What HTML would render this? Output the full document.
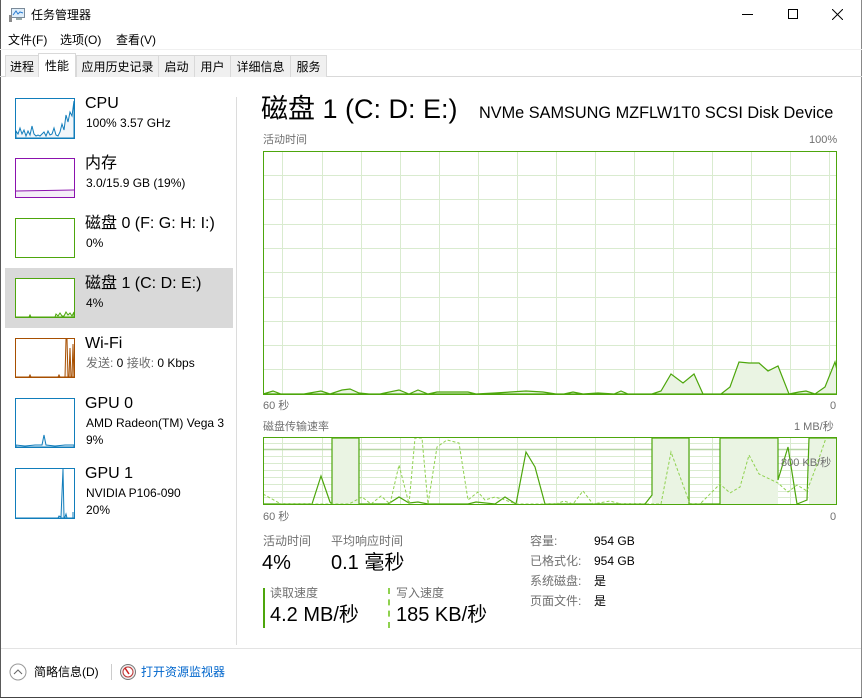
<!DOCTYPE html>
<html><head><meta charset="utf-8"><style>
*{margin:0;padding:0;box-sizing:border-box}
body{width:862px;height:698px;overflow:hidden;background:#fff;font-family:"Liberation Sans","Noto Sans CJK SC",sans-serif;color:#000;position:relative;line-height:1.2}
.a{position:absolute;white-space:nowrap}
.menu{font-size:12px;top:33px}
.tab{position:absolute;top:55px;height:22px;font-size:12px;border:1px solid #d9d9d9;border-bottom:none;background:#f0f0f0;padding:3px 0 0 0;text-align:center;white-space:nowrap;line-height:16px}
.nm{font-size:16px;left:85px;line-height:18px}
.sb{font-size:12px;left:86px;line-height:14px}
.g{color:#6d6d6d}
.lbl{font-size:11px;color:#707070;line-height:13px}
</style></head><body>
<div class="a" style="left:0;top:0;width:1px;height:698px;background:#5a5a5a"></div>
<div class="a" style="right:0;top:0;width:1px;height:698px;background:#888"></div>
<div class="a" style="left:0;top:697px;width:862px;height:1px;background:#444"></div>
<svg class="a" style="left:8px;top:7px" width="18" height="16"><rect x="3.5" y="1.5" width="13" height="9" fill="#dfeefa" stroke="#7a8a99"/><polyline points="5,8 8,4 10,7 12,5 15,6" fill="none" stroke="#2a7bd0"/><rect x="1" y="8" width="3" height="7" fill="#8a8a8a"/><rect x="8" y="11" width="6" height="2" fill="#9aa"/></svg>
<div class="a" style="left:31px;top:8px;font-size:12px;line-height:14px">任务管理器</div>
<div class="a" style="left:742px;top:14px;width:11px;height:1px;background:#000"></div>
<div class="a" style="left:788px;top:9px;width:10px;height:10px;border:1px solid #000"></div>
<svg class="a" style="left:832px;top:9px" width="11" height="11"><path d="M0,0L11,11M11,0L0,11" stroke="#000" stroke-width="1"/></svg>
<div class="a menu" style="left:8px;line-height:14px">文件(F)</div>
<div class="a menu" style="left:60px;line-height:14px">选项(O)</div>
<div class="a menu" style="left:116px;line-height:14px">查看(V)</div>
<div class="a" style="left:0;top:49px;width:862px;height:1px;background:#f0f0f0"></div>
<div class="a" style="left:0;top:76px;width:862px;height:1px;background:#d9d9d9"></div>
<div class="tab" style="left:5px;width:34px">进程</div>
<div class="tab" style="left:38px;top:53px;height:24px;width:38px;background:#fff;padding-top:4px">性能</div>
<div class="tab" style="left:76px;width:83px">应用历史记录</div>
<div class="tab" style="left:158px;width:37px">启动</div>
<div class="tab" style="left:194px;width:37px">用户</div>
<div class="tab" style="left:230px;width:61px">详细信息</div>
<div class="tab" style="left:290px;width:37px">服务</div>
<div class="a" style="left:5px;top:268px;width:228px;height:60px;background:#d9d9d9"></div>
<div class="a" style="left:236px;top:97px;width:1px;height:548px;background:#dcdcdc"></div>
<svg class="a" style="left:15px;top:98px" width="60" height="41"><rect x="0.5" y="0.5" width="59" height="40" fill="#fff" stroke="#117dbb"/><path d="M1,40 L1,33 3,36 5,30 7,36 9,32 11,38 13,33 15,37 17,28 19,36 21,38 23,37 25,38 27,36 29,34 31,38 33,33 35,37 37,36 39,30 41,37 43,38 45,34 47,26 49,32 51,17 53,24 55,14 57,18 59,3 L59,40Z" fill="#f1f6fa" stroke="#117dbb" stroke-width="1"/></svg>
<div class="a nm" style="top:95px">CPU</div><div class="a sb" style="top:116px">100% 3.57 GHz</div>
<svg class="a" style="left:15px;top:158px" width="60" height="40"><rect x="0.5" y="0.5" width="59" height="39" fill="#fff" stroke="#8b12ae"/><rect x="1" y="33" width="58" height="6" fill="#f4eef7"/><line x1="1" y1="33" x2="59" y2="32" stroke="#8b12ae"/></svg>
<div class="a nm" style="top:155px">内存</div><div class="a sb" style="top:176px">3.0/15.9 GB (19%)</div>
<svg class="a" style="left:15px;top:218px" width="60" height="40"><rect x="0.5" y="0.5" width="59" height="39" fill="#fff" stroke="#4da60c"/></svg>
<div class="a nm" style="top:215px">磁盘 0 (F: G: H: I:)</div><div class="a sb" style="top:236px">0%</div>
<svg class="a" style="left:15px;top:278px" width="60" height="40"><rect x="0.5" y="0.5" width="59" height="39" fill="#fff" stroke="#4da60c"/><path d="M1,39 L14,39 15,37 16,39 40,39 41,36 43,38 45,35 47,38 49,38 51,34 53,37 55,35 57,38 59,34 L59,39Z" fill="#eaf4e3" stroke="#4da60c"/></svg>
<div class="a nm" style="top:275px">磁盘 1 (C: D: E:)</div><div class="a sb" style="top:296px">4%</div>
<svg class="a" style="left:15px;top:338px" width="60" height="40"><rect x="0.5" y="0.5" width="59" height="39" fill="#fff" stroke="#a74f01"/><path d="M1,39 L14,39 15,37 16,39 43,39 44,37 45,39 50,39 51,1 52,1 53,39 54,39 55,10 56,39 57,39 58,6 59,39Z" fill="#f6ede4" stroke="#a74f01"/></svg>
<div class="a nm" style="top:335px">Wi-Fi</div><div class="a sb" style="top:356px"><span class="g">发送:</span> 0 <span class="g">接收:</span> 0 Kbps</div>
<svg class="a" style="left:15px;top:398px" width="60" height="50"><rect x="0.5" y="0.5" width="59" height="49" fill="#fff" stroke="#117dbb"/><path d="M1,49 L1,47 10,48 20,47 27,47 29,37 31,47 40,48 50,47 59,47 L59,49Z" fill="#eef5fa" stroke="#117dbb"/></svg>
<div class="a nm" style="top:395px">GPU 0</div><div class="a sb" style="top:416px">AMD Radeon(TM) Vega 3</div><div class="a sb" style="top:433px">9%</div>
<svg class="a" style="left:15px;top:468px" width="60" height="51"><rect x="0.5" y="0.5" width="59" height="50" fill="#fff" stroke="#117dbb"/><path d="M1,50 L43,50 44,48 46,49 48,1 49,49 50,49 51,46 52,50 59,50Z" fill="#eef5fa" stroke="#117dbb"/><line x1="58" y1="44" x2="58" y2="50" stroke="#117dbb"/></svg>
<div class="a nm" style="top:465px">GPU 1</div><div class="a sb" style="top:486px">NVIDIA P106-090</div><div class="a sb" style="top:503px">20%</div>
<div class="a" style="left:261px;top:93px;font-size:27px;line-height:32px">磁盘 1 (C: D: E:)</div>
<div class="a" style="left:479px;top:104px;font-size:16.3px;line-height:19px">NVMe SAMSUNG MZFLW1T0 SCSI Disk Device</div>
<div class="a lbl" style="left:263px;top:134px">活动时间</div>
<div class="a lbl" style="left:809px;top:134px">100%</div>
<svg class="a" style="left:263px;top:151px" width="574" height="244">
<rect width="574" height="244" fill="#fff"/>
<g stroke="#d9ebcf" stroke-width="1">
<path d="M19.5,0V244M59.5,0V244M98.5,0V244M137.5,0V244M176.5,0V244M215.5,0V244M254.5,0V244M293.5,0V244M332.5,0V244M371.5,0V244M410.5,0V244M449.5,0V244M488.5,0V244M527.5,0V244M566.5,0V244"/>
<path d="M0,24.5H574M0,48.5H574M0,73.5H574M0,97.5H574M0,121.5H574M0,146.5H574M0,170.5H574M0,194.5H574M0,218.5H574"/>
</g>
<path d="M0,243 L10,240 18,243 41,243 58,240 67,243 79,239 87,238 96,242 106,243 117,243 136,239 146,243 155,239 165,243 174,241 205,241 213,243 232,242 263,240 280,241 293,243 301,243 310,241 320,243 335,242 351,243 358,240 365,243 389,243 398,240 408,223 420,232 431,223 440,243 458,243 467,236 476,211 486,212 496,212 505,220 515,215 526,243 536,241 543,240 552,243 562,236 572,211 574,219 L574,243Z" fill="#eaf4e3" stroke="#4da60c" stroke-width="1.2"/>
<rect x="0.5" y="0.5" width="573" height="243" fill="none" stroke="#4da60c"/>
</svg>
<div class="a lbl" style="left:263px;top:400px">60 秒</div>
<div class="a lbl" style="left:830px;top:400px">0</div>
<div class="a lbl" style="left:263px;top:421px">磁盘传输速率</div>
<div class="a lbl" style="left:794px;top:421px">1 MB/秒</div>
<svg class="a" style="left:263px;top:437px" width="574" height="68">
<rect width="574" height="68" fill="#fff"/>
<g stroke="#d9ebcf">
<path d="M19.5,0V68M59.5,0V68M98.5,0V68M137.5,0V68M176.5,0V68M215.5,0V68M254.5,0V68M293.5,0V68M332.5,0V68M371.5,0V68M410.5,0V68M449.5,0V68M488.5,0V68M527.5,0V68M566.5,0V68"/>
<path d="M0,6.5H574M0,19.5H574M0,26.5H574M0,33.5H574M0,40.5H574M0,47.5H574M0,54.5H574M0,60.5H574"/>
</g>
<line x1="0" y1="12.5" x2="574" y2="12.5" stroke="#b7d6a6" stroke-width="1.5"/>
<g fill="#eaf4e3">
<rect x="69" y="0" width="27" height="67"/><rect x="389" y="0" width="38" height="67"/><rect x="457" y="0" width="58" height="67"/><rect x="546" y="0" width="28" height="67"/>
</g>
<path d="M0,67 L49,67 58,39 67,65 69,67 69,1 96,1 96,67 125,67 136,60 146,66 155,65 165,67 205,67 213,65 232,67 242,60 253,67 263,15 272,30 282,67 382,67 389,58 389,1 426,1 426,67 457,67 457,1 515,1 515,43 525,10 534,67 544,63 546,1 574,1" fill="none" stroke="#4da60c" stroke-width="1.2"/>
<path d="M0,57 L18,67 86,67 99,60 108,67 118,59 127,67 136,28 146,67 152,1 159,1 165,67 174,10 184,3 196,6 205,63 215,55 222,63 232,60 242,63 253,67 293,67 301,64 310,67 320,54 330,67 347,64 358,67 398,67 408,15 427,67 437,67 457,47 467,56 477,50 486,18 496,37 515,46 525,55 534,48 544,54 553,30 563,1" fill="none" stroke="#8fd14f" stroke-width="1" stroke-dasharray="3,2"/>
<rect x="0.5" y="0.5" width="573" height="67" fill="none" stroke="#4da60c"/>
<text x="518" y="29" font-size="11" fill="#707070" font-family="Liberation Sans,Noto Sans CJK SC,sans-serif">800 KB/秒</text>
</svg>
<div class="a lbl" style="left:263px;top:511px">60 秒</div>
<div class="a lbl" style="left:830px;top:511px">0</div>
<div class="a lbl" style="left:263px;top:534px;font-size:12px;line-height:14px">活动时间</div>
<div class="a lbl" style="left:331px;top:534px;font-size:12px;line-height:14px">平均响应时间</div>
<div class="a" style="left:262px;top:551px;font-size:20px;line-height:24px">4%</div>
<div class="a" style="left:331px;top:551px;font-size:20px;line-height:24px">0.1 毫秒</div>
<div class="a" style="left:263px;top:588px;width:2px;height:40px;background:#4da60c"></div>
<div class="a" style="left:388px;top:588px;width:2px;height:40px;border-left:2px dashed #8fd14f"></div>
<div class="a lbl" style="left:270px;top:586px;font-size:12px;line-height:14px">读取速度</div>
<div class="a lbl" style="left:396px;top:586px;font-size:12px;line-height:14px">写入速度</div>
<div class="a" style="left:270px;top:603px;font-size:20px;line-height:24px">4.2 MB/秒</div>
<div class="a" style="left:396px;top:603px;font-size:20px;line-height:24px">185 KB/秒</div>
<div class="a lbl" style="left:530px;top:534px;font-size:12px;line-height:14px">容量:</div><div class="a" style="left:594px;top:534px;font-size:12px;line-height:14px">954 GB</div>
<div class="a lbl" style="left:530px;top:554px;font-size:12px;line-height:14px">已格式化:</div><div class="a" style="left:594px;top:554px;font-size:12px;line-height:14px">954 GB</div>
<div class="a lbl" style="left:530px;top:574px;font-size:12px;line-height:14px">系统磁盘:</div><div class="a" style="left:594px;top:574px;font-size:12px;line-height:14px">是</div>
<div class="a lbl" style="left:530px;top:594px;font-size:12px;line-height:14px">页面文件:</div><div class="a" style="left:594px;top:594px;font-size:12px;line-height:14px">是</div>
<div class="a" style="left:1px;top:648px;width:860px;height:1px;background:#e3e3e3"></div>
<svg class="a" style="left:9px;top:663px" width="18" height="18"><circle cx="9" cy="9" r="8" fill="#fff" stroke="#999"/><path d="M5,11L9,7 13,11" fill="none" stroke="#666"/></svg>
<div class="a" style="left:34px;top:665px;font-size:12px;line-height:14px">简略信息(D)</div>
<div class="a" style="left:111px;top:664px;width:1px;height:16px;background:#ccc"></div>
<svg class="a" style="left:119px;top:663px" width="18" height="18"><circle cx="9" cy="9" r="7.5" fill="#eee" stroke="#777"/><circle cx="9" cy="9" r="5" fill="#fff" stroke="#b33"/><path d="M6,5L10,11" stroke="#c22" stroke-width="1.5"/></svg>
<div class="a" style="left:141px;top:665px;font-size:12px;line-height:14px;color:#0066cc">打开资源监视器</div>
</body></html>
